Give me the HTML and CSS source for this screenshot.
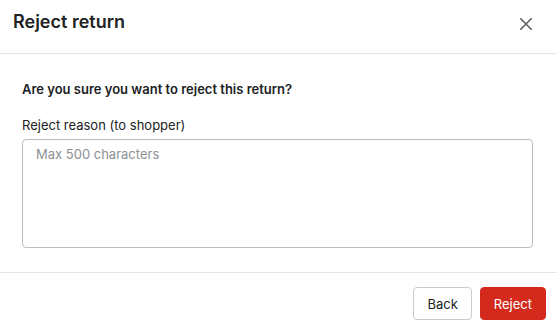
FILE: index.html
```html
<!DOCTYPE html>
<html lang="en">
<head>
    <meta charset="UTF-8">
    <meta name="viewport" content="width=device-width, initial-scale=1.0">
    <title>Reject return</title>
    <link rel="stylesheet" href="styles.css">
</head>
<body>
    <div class="modal">
        <div class="modal-header">
            <h2>Reject return</h2>
            <button class="close-btn" title="Close">
                <svg viewBox="0 0 12 12" width="12" height="12">
                    <path d="M0.8 0.8 L11.2 11.2 M11.2 0.8 L0.8 11.2" stroke="#5c5f62" stroke-width="1.6" stroke-linecap="round" fill="none"/>
                </svg>
            </button>
        </div>

        <div class="modal-body">
            <p class="question">Are you sure you want to reject this return?</p>
            <label for="reason">Reject reason (to shopper)</label>
            <textarea id="reason" placeholder="Max 500 characters" maxlength="500"></textarea>
        </div>

        <div class="modal-footer">
            <button class="btn">Back</button>
            <button class="btn btn-danger">Reject</button>
        </div>
    </div>
</body>
</html>
```

FILE: styles.css
```css
:root {
    --text: #202223;
    --muted: #8c9196;
    --divider: #e4e5e7;
    --danger: #d42a1d;
}

body {
    margin: 0;
    background: white;
    font-family: Inter, "Noto Sans", sans-serif;
    color: var(--text);
}

.modal {
    width: 557px;
}

.modal-header {
    display: flex;
    align-items: flex-start;
    justify-content: space-between;
    height: 54px;
    box-sizing: border-box;
    padding: 10px 21px 0 13px;
    border-bottom: 1px solid var(--divider);
}

.modal-header h2 {
    margin: 0;
    font-size: 18px;
    line-height: 24px;
    font-weight: 600;
}

.close-btn {
    display: flex;
    align-items: center;
    justify-content: center;
    width: 20px;
    height: 20px;
    margin-top: 4px;
    padding: 0;
    border: none;
    background: none;
    cursor: pointer;
}

.modal-body {
    padding: 25px 24px 24px 22px;
}

.question {
    margin: 0 0 16px;
    font-size: 13px;
    line-height: 20px;
    font-weight: 600;
}

label {
    display: block;
    margin-bottom: 4px;
    font-size: 13px;
    line-height: 20px;
}

textarea {
    display: block;
    width: 100%;
    height: 109px;
    box-sizing: border-box;
    padding: 6px 13px;
    border: 1px solid #b9bec3;
    border-radius: 4px;
    font-family: inherit;
    font-size: 13px;
    line-height: 16px;
    color: var(--text);
    resize: none;
    outline: none;
}

textarea::placeholder {
    color: var(--muted);
}

.modal-footer {
    display: flex;
    justify-content: flex-end;
    gap: 8px;
    padding: 14px 11px 14px 0;
    border-top: 1px solid var(--divider);
}

.btn {
    height: 33px;
    padding: 0 13px;
    border: 1px solid #c9cccf;
    border-radius: 4px;
    background: white;
    font-family: inherit;
    font-size: 13px;
    color: var(--text);
    cursor: pointer;
}

.btn-danger {
    background: var(--danger);
    border-color: var(--danger);
    color: white;
}
```
